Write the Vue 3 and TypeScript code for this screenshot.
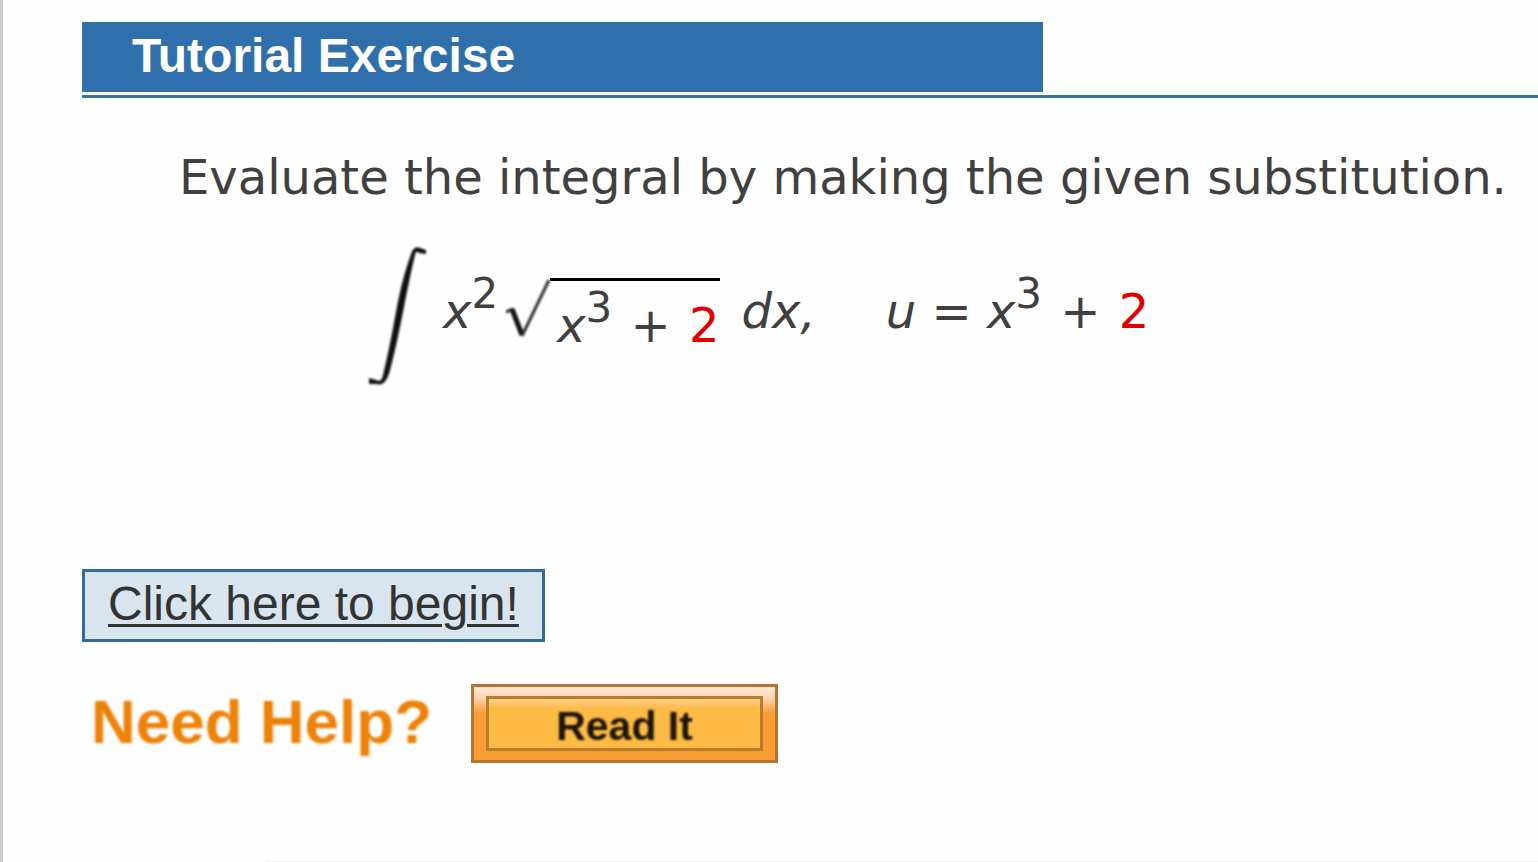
<script setup lang="ts">
const title: string = 'Tutorial Exercise'
const prompt: string = 'Evaluate the integral by making the given substitution.'
const constant: number = 2
</script>

<template>
  <main class="page">
    <header class="heading">
      <h1 class="title">{{ title }}</h1>
    </header>

    <section class="question">
      <p class="prompt">{{ prompt }}</p>
      <div class="formula">
        <svg class="integral" width="58" height="140" viewBox="0 0 58 140" role="img" aria-label="integral">
          <path d="M57 8L50 7C48 5 47 5 46 9C41 30 38 46 34 66C29 91 25 110 20 128C17 136 13 140 8 138L0 138L0 132L7 134C11 136 13 134 14 129C19 108 23 88 27 66C31 43 36 25 42 8C44 2 47 0 51 2L57 4Z" fill="#111" />
        </svg>
        <span class="term"><i>x</i><sup>2</sup></span>
        <span class="root">
          <svg class="radical" width="44" height="60" viewBox="0 0 44 60" role="img" aria-label="square root">
            <path d="M0 34L7 31" stroke="#333" stroke-width="3" fill="none" />
            <path d="M6 31L16 57" stroke="#111" stroke-width="5" fill="none" />
            <path d="M16 58L43 2" stroke="#333" stroke-width="3" fill="none" />
          </svg>
          <span class="radicand"><i>x</i><sup>3</sup> <span class="plus">+</span> <b class="constant">{{ constant }}</b></span>
        </span>
        <i class="differential">dx,</i>
        <span class="substitution"><i>u</i> = <i>x</i><sup>3</sup> <span class="plus">+</span> <b class="constant">{{ constant }}</b></span>
      </div>
    </section>

    <a class="begin" href="#begin">Click here to begin!</a>

    <section class="help">
      <h2 class="help-label">Need Help?</h2>
      <button class="read" type="button"><span class="read-face"><span class="read-text">Read It</span></span></button>
    </section>

    <hr class="divider" />
  </main>
</template>

<style>
body {
  margin: 0;
  background: #fefefe;
}
</style>

<style scoped>
.page {
  box-sizing: border-box;
  display: flex;
  flex-direction: column;
  min-height: 100vh;
  padding: 22px 0 0 79px;
  border-left: 3px solid #ccc;
  font-family: "Liberation Sans", Arial, sans-serif;
  font-size: 48px;
  color: #404040;
}

.heading {
  padding-bottom: 3px;
  border-bottom: 3px solid #2e75ae;
}

.title {
  width: 66%;
  box-sizing: border-box;
  margin: 0;
  padding: 1px 50px 3px;
  background: #2f6fac;
  color: #fff;
  font-size: 48px;
  line-height: 66px;
  font-weight: 700;
}

.question {
  padding: 51px 0 0 97px;
  font-family: Verdana, "DejaVu Sans", sans-serif;
}

.prompt {
  margin: 0;
  line-height: 56px;
  white-space: nowrap;
}

.formula {
  display: flex;
  align-items: flex-start;
  margin: 41px 0 0 190px;
  line-height: 56px;
  white-space: nowrap;
}

.integral {
  flex: none;
  filter: blur(1px);
}

.term,
.differential,
.substitution {
  margin-top: 37px;
}

.term {
  margin-left: 16px;
}

sup {
  position: relative;
  bottom: 20px;
  font-size: 42px;
  line-height: 0;
  vertical-align: baseline;
}

.root {
  display: flex;
  align-items: flex-start;
  margin: 32px 0 0 8px;
}

.radical {
  flex: none;
  filter: blur(1px);
}

.radicand {
  padding: 16px 0 0 7px;
  border-top: 3px solid #000;
}

.plus {
  margin: 0 3px;
}

.constant {
  color: #e00000;
  font-weight: 400;
}

.differential {
  margin-left: 22px;
}

.substitution {
  margin-left: 70px;
}

.begin {
  align-self: flex-start;
  margin-top: 183px;
  padding: 0 23px 4px;
  border: 3px solid #356a9f;
  background: #d9e5ee;
  color: #333;
  line-height: 63px;
  text-decoration-thickness: 3px;
  text-underline-offset: 4px;
}

.help {
  display: flex;
  align-items: flex-start;
  gap: 39px;
  margin-top: 42px;
  padding-left: 9px;
}

.help-label {
  margin: 0;
  color: #ee8208;
  font-size: 62px;
  line-height: 76px;
  font-weight: 700;
  filter: blur(1px);
}

.read {
  width: 307px;
  height: 79px;
  padding: 9px 12px;
  border: 3px solid #b57532;
  background: linear-gradient(#ffe8d4, #fdd9b8 10px, #fb9c34 26px);
  font-family: inherit;
  color: #1c1404;
}

.read-face {
  display: block;
  box-sizing: border-box;
  height: 55px;
  border: 3px solid #b97b2c;
  background: linear-gradient(#fdd08c, #fdbb45 10px);
}

.read-text {
  display: block;
  font-size: 41px;
  line-height: 55px;
  font-weight: 700;
  filter: blur(1px);
}

.divider {
  width: calc(100% - 184px);
  margin: auto 0 0 184px;
  border: 0;
  border-top: 1px solid #f0f0f0;
}
</style>
